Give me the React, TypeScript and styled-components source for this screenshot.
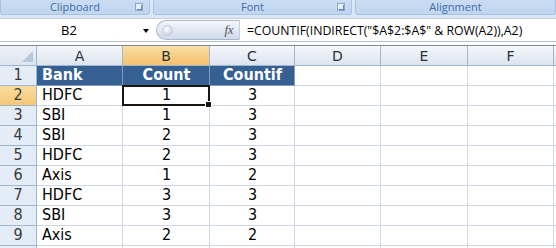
import React from "react";
import styled, { createGlobalStyle, css } from "styled-components";

const GlobalStyle = createGlobalStyle`
  html, body { margin: 0; padding: 0; background: #ffffff; overflow: hidden; }
  body { width: 556px; height: 248px; }
  * { box-sizing: border-box; }
`;

const Page = styled.div`
  width: 556px;
  height: 248px;
  display: flex;
  flex-direction: column;
  background: #ffffff;
  overflow: hidden;
`;

/* ---------- Ribbon group label strip ---------- */
const RibbonBar = styled.div`
  height: 18px;
  display: flex;
  gap: 3px;
  padding: 0 0 3px 0;
  background: #dce7f5;
  flex-shrink: 0;
`;

const RibbonGroup = styled.div<{ $w?: number }>`
  position: relative;
  ${(p) => (p.$w ? css`width: ${p.$w}px;` : css`flex: 1;`)}
  height: 15px;
  background: linear-gradient(#c9dcf2, #c0d6ef);
  border: 1px solid #a7c2e3;
  border-top: none;
  border-radius: 0 0 3px 3px;
  display: flex;
  align-items: center;
  justify-content: center;
`;

const GroupLabel = styled.span`
  font-family: "Open Sans", "Noto Sans", sans-serif;
  font-size: 11px;
  color: #3e6aaa;
  line-height: 14px;
`;

const Launcher = styled.span`
  position: absolute;
  right: 6px;
  top: 3px;
  width: 8px;
  height: 8px;
  border: 1px solid #8aa6cc;
  background: #e6eef8;
  &::after {
    content: "";
    position: absolute;
    right: 0;
    bottom: 0;
    width: 4px;
    height: 4px;
    border-right: 1px solid #6b86ad;
    border-bottom: 1px solid #6b86ad;
  }
`;

/* ---------- Formula bar ---------- */
const FormulaBar = styled.div`
  height: 24px;
  display: flex;
  align-items: stretch;
  border-top: 1px solid #c5cfdb;
  border-bottom: 1px solid #b6c2d2;
  background: #ffffff;
  flex-shrink: 0;
`;

const NameBox = styled.div`
  width: 156px;
  display: flex;
  align-items: center;
  position: relative;
`;

const NameText = styled.span`
  flex: 1;
  text-align: center;
  padding-right: 18px;
  font-family: "Open Sans", "Noto Sans", sans-serif;
  font-size: 13px;
  color: #000;
`;

const DropArrow = styled.span`
  position: absolute;
  right: 7px;
  top: 10px;
  width: 0;
  height: 0;
  border-left: 3.5px solid transparent;
  border-right: 3.5px solid transparent;
  border-top: 4px solid #000;
`;

const FxPill = styled.div`
  width: 84px;
  margin: 1px 0;
  border-radius: 11px 0 0 11px;
  border: 1px solid #a9b8cc;
  border-right: 1px solid #c5cfdb;
  background: linear-gradient(#f3f6fb, #dfe7f2 55%, #cfdbeb);
  display: flex;
  align-items: center;
  justify-content: space-between;
  padding: 0 6px 0 5px;
`;

const Knob = styled.span`
  width: 11px;
  height: 11px;
  border-radius: 50%;
  background: radial-gradient(circle at 40% 35%, #ffffff, #d7dde6 60%, #b9c3d0);
  border: 1px solid #c3ccd8;
`;

const FxLabel = styled.span`
  font-family: "Liberation Serif", serif;
  font-style: italic;
  font-size: 13px;
  color: #555;
  letter-spacing: -0.5px;
`;

const FormulaText = styled.div`
  flex: 1;
  padding-left: 7px;
  display: flex;
  align-items: center;
  font-family: "Open Sans", "Noto Sans", sans-serif;
  font-size: 12.3px;
  color: #000;
  white-space: nowrap;
  overflow: hidden;
`;

const Spacer = styled.div`
  height: 4px;
  background: #ffffff;
  border-bottom: 1px solid #7f8a99;
  flex-shrink: 0;
`;

/* ---------- Sheet ---------- */
const Sheet = styled.div`
  display: grid;
  grid-template-columns: 37px 86px 87px 85px 86px 87px 86px 1fr;
  grid-auto-rows: 20px;
  position: relative;
`;

const ColHeader = styled.div<{ $sel?: boolean }>`
  display: flex;
  align-items: center;
  justify-content: center;
  font-family: "DejaVu Sans", sans-serif;
  font-size: 14px;
  color: #27313d;
  border-right: 1px solid #9eb6ce;
  border-bottom: 1px solid #9eb6ce;
  background: ${(p) =>
    p.$sel
      ? "linear-gradient(#f9dfa6, #f7cf85 50%, #f4c16b)"
      : "linear-gradient(#f4f7fb, #e9eef5 50%, #dce4ee)"};
`;

const Corner = styled.div`
  position: relative;
  border-right: 1px solid #9eb6ce;
  border-bottom: 1px solid #9eb6ce;
  background: linear-gradient(#eef2f8, #dce4ee);
  &::after {
    content: "";
    position: absolute;
    right: 3px;
    bottom: 3px;
    width: 0;
    height: 0;
    border-left: 11px solid transparent;
    border-bottom: 11px solid #b7c7dc;
  }
`;

const RowHeader = styled.div<{ $sel?: boolean }>`
  display: flex;
  align-items: flex-end;
  justify-content: center;
  padding-bottom: 1px;
  font-family: "DejaVu Sans Condensed", "DejaVu Sans", sans-serif;
  font-size: 16px;
  color: #3a3a3a;
  border-right: 1px solid #9eb6ce;
  border-bottom: 1px solid #9eb6ce;
  background: ${(p) =>
    p.$sel ? "linear-gradient(#f9dca0, #f5c878)" : "#e4ecf7"};
`;

const Cell = styled.div<{ $align?: "left" | "center"; $title?: boolean }>`
  display: flex;
  align-items: flex-end;
  justify-content: ${(p) => (p.$align === "center" ? "center" : "flex-start")};
  padding: 0 4px 1px 5px;
  font-family: "DejaVu Sans Condensed", "DejaVu Sans", sans-serif;
  font-size: 16px;
  line-height: 18px;
  white-space: nowrap;
  overflow: hidden;
  color: #000;
  border-right: 1px solid #d0d7e5;
  border-bottom: 1px solid #d0d7e5;
  ${(p) =>
    p.$title &&
    css`
      background: #366092;
      color: #ffffff;
      font-weight: bold;
      border-right-color: #7f9bc1;
      border-bottom-color: #7f9bc1;
    `}
`;

const Selection = styled.div`
  position: absolute;
  left: 122px;
  top: 39px;
  width: 88px;
  height: 21px;
  border: 2px solid #1b1612;
  pointer-events: none;
  &::after {
    content: "";
    position: absolute;
    right: -4px;
    bottom: -4px;
    width: 5px;
    height: 5px;
    background: #1b1612;
    border: 1px solid #ffffff;
  }
`;

const columns = ["A", "B", "C", "D", "E", "F"];

const rows: [string, string, string][] = [
  ["HDFC", "1", "3"],
  ["SBI", "1", "3"],
  ["SBI", "2", "3"],
  ["HDFC", "2", "3"],
  ["Axis", "1", "2"],
  ["HDFC", "3", "3"],
  ["SBI", "3", "3"],
  ["Axis", "2", "2"],
];

export default function App() {
  return (
    <>
      <GlobalStyle />
      <Page>
        <RibbonBar>
          <RibbonGroup $w={150}>
            <GroupLabel>Clipboard</GroupLabel>
            <Launcher />
          </RibbonGroup>
          <RibbonGroup $w={199}>
            <GroupLabel>Font</GroupLabel>
            <Launcher />
          </RibbonGroup>
          <RibbonGroup>
            <GroupLabel>Alignment</GroupLabel>
          </RibbonGroup>
        </RibbonBar>
        <FormulaBar>
          <NameBox>
            <NameText>B2</NameText>
            <DropArrow />
          </NameBox>
          <FxPill>
            <Knob />
            <FxLabel>fx</FxLabel>
          </FxPill>
          <FormulaText>=COUNTIF(INDIRECT("$A$2:$A$" &amp; ROW(A2)),A2)</FormulaText>
        </FormulaBar>
        <Spacer />
        <Sheet>
          <Corner />
          {columns.map((c) => (
            <ColHeader key={c} $sel={c === "B"}>
              {c}
            </ColHeader>
          ))}
          <ColHeader />

          <RowHeader>1</RowHeader>
          <Cell $title>Bank</Cell>
          <Cell $title $align="center">Count</Cell>
          <Cell $title $align="center">Countif</Cell>
          <Cell />
          <Cell />
          <Cell />
          <Cell />

          {rows.map((r, i) => (
            <React.Fragment key={i}>
              <RowHeader $sel={i === 0}>{i + 2}</RowHeader>
              <Cell>{r[0]}</Cell>
              <Cell $align="center">{r[1]}</Cell>
              <Cell $align="center">{r[2]}</Cell>
              <Cell />
              <Cell />
              <Cell />
              <Cell />
            </React.Fragment>
          ))}
          <RowHeader />
          <Cell />
          <Cell />
          <Cell />
          <Cell />
          <Cell />
          <Cell />
          <Cell />
          <Selection />
        </Sheet>
      </Page>
    </>
  );
}
